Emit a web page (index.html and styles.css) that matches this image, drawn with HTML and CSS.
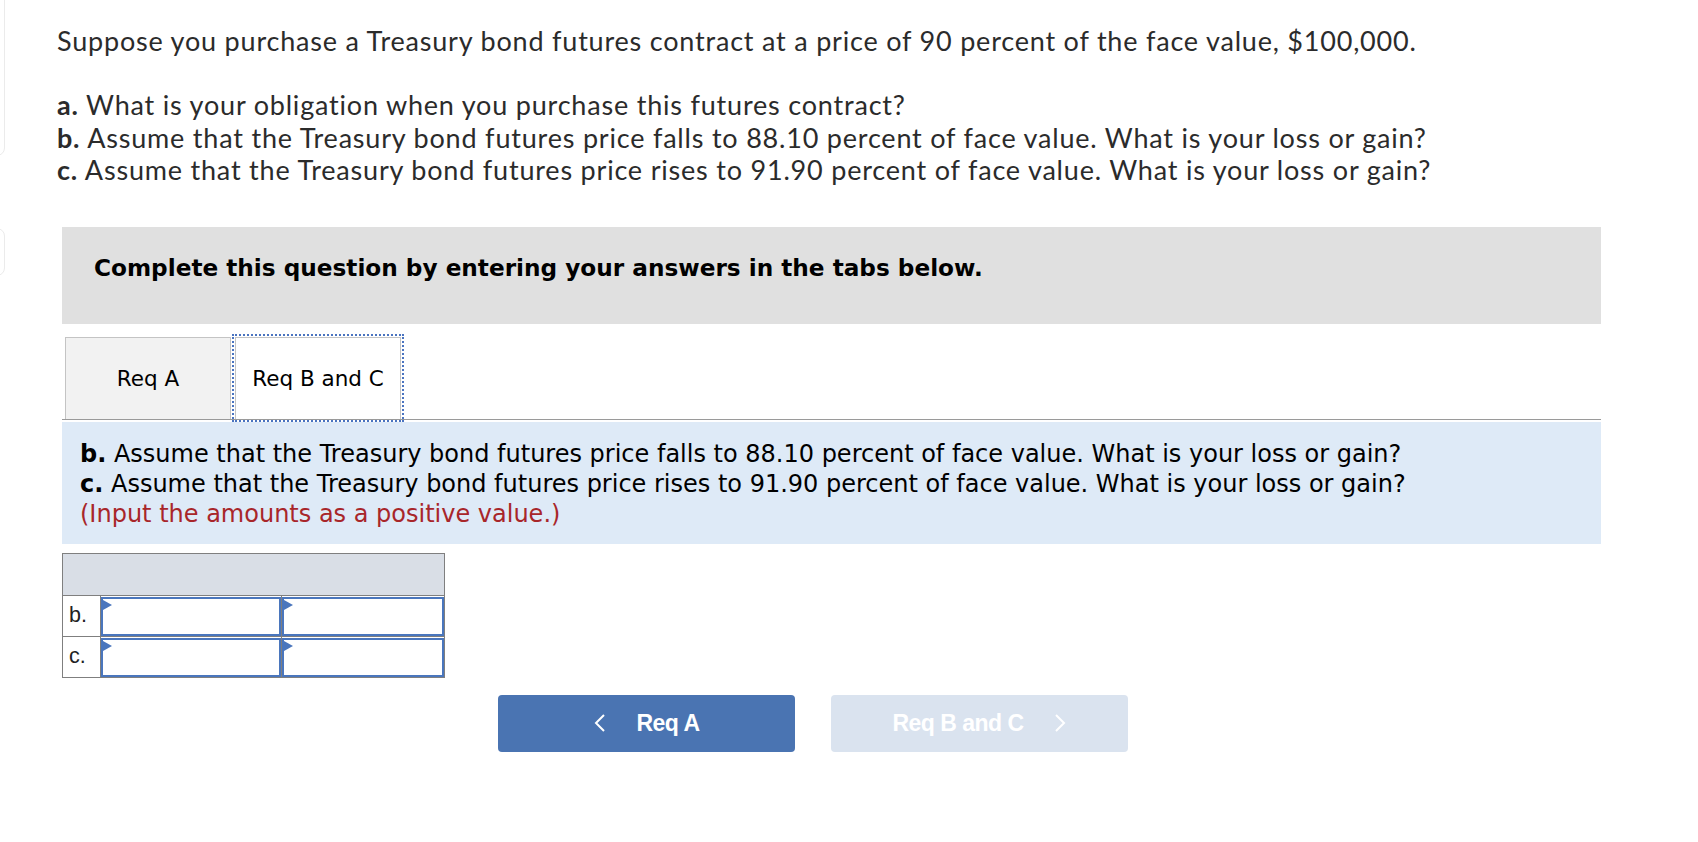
FILE: index.html
```html
<!DOCTYPE html>
<html lang="en">

<head>
    <meta charset="UTF-8">
    <meta name="viewport" content="width=device-width, initial-scale=1.0">
    <title>Treasury bond futures</title>
    <link rel="stylesheet" href="styles.css">
</head>

<body>
    <div class="rail rail-top"></div>
    <div class="rail rail-mid"></div>

    <div class="pregunta">
        <p class="enunciado">Suppose you purchase a Treasury bond futures contract at a price of 90 percent of the face value, $100,000.</p>
        <p class="partes">
            <b>a.</b> What is your obligation when you purchase this futures contract?<br>
            <b>b.</b> Assume that the Treasury bond futures price falls to 88.10 percent of face value. What is your loss or gain?<br>
            <b>c.</b> Assume that the Treasury bond futures price rises to 91.90 percent of face value. What is your loss or gain?
        </p>
    </div>

    <div class="contenedor">
        <div class="instrucciones">Complete this question by entering your answers in the tabs below.</div>

        <div class="pestanas">
            <div class="pestana">Req A</div>
            <div class="pestana activa">Req B and C</div>
        </div>

        <div class="detalle">
            <b>b.</b> Assume that the Treasury bond futures price falls to 88.10 percent of face value. What is your loss or gain?<br>
            <b>c.</b> Assume that the Treasury bond futures price rises to 91.90 percent of face value. What is your loss or gain?<br>
            <span class="nota">(Input the amounts as a positive value.)</span>
        </div>

        <table class="respuestas">
            <tr class="cabecera">
                <td colspan="3"></td>
            </tr>
            <tr>
                <td class="etiqueta">b.</td>
                <td class="celda"><div class="campo"></div></td>
                <td class="celda"><div class="campo"></div></td>
            </tr>
            <tr>
                <td class="etiqueta">c.</td>
                <td class="celda"><div class="campo"></div></td>
                <td class="celda"><div class="campo"></div></td>
            </tr>
        </table>

        <div class="navegacion">
            <div class="boton anterior">
                <svg width="13" height="18" viewBox="0 0 13 18"><path d="M11 1 L3 9 L11 17" fill="none" stroke="white" stroke-width="2"/></svg>
                <span>Req A</span>
            </div>
            <div class="boton siguiente">
                <span>Req B and C</span>
                <svg width="13" height="18" viewBox="0 0 13 18"><path d="M2 1 L10 9 L2 17" fill="none" stroke="white" stroke-width="2"/></svg>
            </div>
        </div>
    </div>
</body>

</html>
```

FILE: styles.css
```css
body {
    margin: 0;
    background-color: white;
    position: relative;
}

/* bordes de tarjetas que quedan fuera de la pantalla */
.rail {
    position: absolute;
    left: -40px;
    width: 43px;
    border: 1px solid #ebebeb;
    border-radius: 8px;
}

.rail-top {
    top: -20px;
    height: 174px;
}

.rail-mid {
    top: 228px;
    height: 46px;
}

.pregunta {
    padding: 25px 0 0 57px;
    font-family: Lato, "Liberation Sans", sans-serif;
    font-size: 27px;
    line-height: 32.4px;
    letter-spacing: 0.8px;
    color: #2b2b2b;
}

.pregunta p {
    margin: 0;
}

.enunciado {
    margin-bottom: 32px !important;
}

.contenedor {
    margin: 40px 0 0 62px;
    width: 1539px;
}

.instrucciones {
    background-color: #e0e0e0;
    height: 97px;
    box-sizing: border-box;
    padding: 27px 0 0 32px;
    font-family: "DejaVu Sans", Verdana, sans-serif;
    font-weight: bold;
    font-size: 23.2px;
    line-height: 28px;
    color: black;
}

.pestanas {
    display: flex;
    gap: 4px;
    margin-top: 13px;
    padding-left: 3px;
    border-bottom: 1px solid #9a9a9a;
    font-family: "DejaVu Sans", Verdana, sans-serif;
    font-size: 21.5px;
    color: black;
}

.pestana {
    width: 166px;
    height: 82px;
    box-sizing: border-box;
    display: flex;
    justify-content: center;
    align-items: center;
    background-color: #f2f2f2;
    border: 1px solid #c4c4c4;
    border-bottom: none;
}

.pestana.activa {
    background-color: white;
    outline: 2px dotted #4a74c0;
    outline-offset: 1px;
}

.detalle {
    margin-top: 2px;
    background-color: #deeaf7;
    padding: 17px 0 15px 18px;
    font-family: "DejaVu Sans", Verdana, sans-serif;
    font-size: 24px;
    line-height: 30px;
    color: black;
}

.nota {
    color: #a8262a;
}

.respuestas {
    margin-top: 9px;
    border-collapse: collapse;
    font-family: "Liberation Sans", Arial, sans-serif;
    font-size: 21.5px;
    color: #222;
}

.respuestas td {
    border: 1px solid #7f7f7f;
    padding: 0;
}

.cabecera td {
    height: 41px;
    background-color: #d9dee6;
}

.etiqueta {
    width: 38px;
    height: 40px;
    box-sizing: border-box;
    padding-left: 6px !important;
}

.celda {
    padding: 1px 0 0 0 !important;
}

.celda:last-child .campo {
    width: 162px;
}

.campo {
    position: relative;
    width: 180px;
    height: 39px;
    box-sizing: border-box;
    border: 2px solid #4a76bd;
    background-color: white;
}

/* triangulo de la esquina */
.campo::before {
    content: "";
    position: absolute;
    top: 1px;
    left: 0;
    border-top: 5px solid transparent;
    border-bottom: 5px solid transparent;
    border-left: 9px solid #4a76bd;
}

.navegacion {
    display: flex;
    gap: 36px;
    margin: 17px 0 0 436px;
}

.boton {
    width: 297px;
    height: 57px;
    border-radius: 4px;
    display: flex;
    justify-content: center;
    align-items: center;
    gap: 30px;
    font-family: "Liberation Sans", Arial, sans-serif;
    font-weight: bold;
    font-size: 23px;
    letter-spacing: -0.5px;
    color: white;
}

.anterior {
    background-color: #4a74b2;
}

.siguiente {
    background-color: #dae3ef;
}
```
